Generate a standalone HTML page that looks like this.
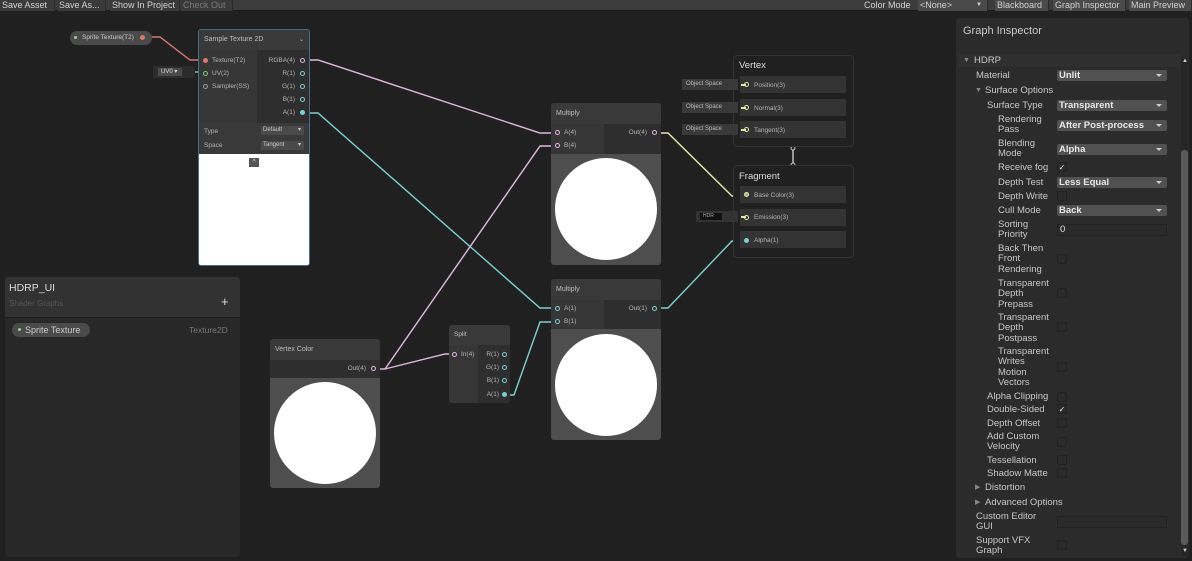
<!DOCTYPE html>
<html><head><meta charset="utf-8"><style>
*{box-sizing:border-box;margin:0;padding:0}
body{width:1192px;height:561px;background:#202020;font-family:"Liberation Sans",sans-serif;position:relative;overflow:hidden;color:#c4c4c4}
.a{position:absolute}
.tb{left:0;top:0;width:1192px;height:11px;background:#3c3c3c;border-bottom:1px solid #1a1a1a}
.tbb{position:absolute;top:0;height:11px;font-size:9px;line-height:11px;color:#d2d2d2;padding:0 2px;background:#3a3a3a;border-right:1px solid #2a2a2a;white-space:nowrap;overflow:hidden}
.node{position:absolute;background:#2e2e2e;border-radius:3px;overflow:hidden}
.nh{position:absolute;left:0;right:0;top:0;background:#393939;font-size:7px;color:#bfbfbf;padding-left:5px}
.pt{position:absolute;font-size:6.5px;color:#b5b5b5;white-space:nowrap}
.dot{position:absolute;width:5px;height:5px;border-radius:50%;border:1px solid #9a9a9a}
.prev{position:absolute;left:0;right:0;background:#4e4e4e}
.circ{position:absolute;background:#fff;border-radius:50%}
.lb{position:absolute;font-size:9.5px;line-height:10.4px;color:#c8c8c8;white-space:nowrap}
.dd{position:absolute;left:1057px;width:110px;height:11px;background:#515151;border-radius:2px;font-size:9.5px;line-height:11px;color:#e8e8e8;padding-left:2px;font-weight:bold}
.dd:after{content:"";position:absolute;right:5px;top:4px;border-left:3px solid transparent;border-right:3px solid transparent;border-top:3px solid #ccc}
.cb{position:absolute;left:1057px;width:10px;height:10px;background:#2a2a2a;border:1px solid #222;border-radius:2px;font-size:8px;line-height:9px;text-align:center;color:#eee}
.ms{position:absolute;height:11px;background:#393939;font-size:6px;line-height:11px;color:#bbb;padding-left:4px;white-space:nowrap}
</style></head><body>
<div class="a tb"></div>
<div class="tbb" style="left:0;width:55px">Save Asset</div>
<div class="tbb" style="left:57px;width:49px">Save As...</div>
<div class="tbb" style="left:110px;width:70px">Show In Project</div>
<div class="tbb" style="left:181px;width:52px;color:#7a7a7a">Check Out</div>
<div class="a" style="left:864px;top:0;font-size:9px;line-height:11px;color:#d2d2d2;white-space:nowrap">Color Mode</div>
<div class="tbb" style="left:918px;width:70px;background:#4a4a4a">&lt;None&gt;<span style="position:absolute;right:5px;font-size:6px">▼</span></div>
<div class="tbb" style="left:995px;width:54px;background:#4a4a4a">Blackboard</div>
<div class="tbb" style="left:1053px;width:73px;background:#4a4a4a">Graph Inspector</div>
<div class="tbb" style="left:1129px;width:63px;background:#4a4a4a">Main Preview</div>

<svg class="a" style="left:0;top:0" width="1192" height="561">
<g fill="none" stroke-width="1.4">
<path d="M146,37 L160,37 L190,60 L205,60" stroke="#d47a72"/>
<path d="M190,72 L205,72" stroke="#7fc97f"/>
<path d="M303,60 L318,60 L540,133 L557,133" stroke="#e0b8e0"/>
<path d="M303,113 L318,113 L540,308 L557,308" stroke="#7ed0d0"/>
<path d="M374,369 L385,369 L540,146 L557,146" stroke="#e0b8e0"/>
<path d="M385,369 L445,354 L454,354" stroke="#e0b8e0"/>
<path d="M503,395 L514,395 L540,322 L557,322" stroke="#7ed0d0"/>
<path d="M655,133 L668,133 L732,196 L747,196" stroke="#e8e8a8"/>
<path d="M655,308 L668,308 L732,241 L747,241" stroke="#7ed0d0"/>
<path d="M793,148 L793,165" stroke="#ccc"/>
</g>
<circle cx="793" cy="148" r="2" fill="#202020" stroke="#ccc"/>
<circle cx="793" cy="165" r="2" fill="#202020" stroke="#ccc"/>
</svg>

<div class="a" style="left:70px;top:31px;width:82px;height:14px;background:#4a4a4a;border-radius:7px;font-size:6.5px;line-height:14px;color:#c8c8c8;padding-left:12px;white-space:nowrap">Sprite Texture(T2)</div>
<div class="a" style="left:74px;top:36px;width:3px;height:3px;background:#9c9;border-radius:50%"></div>
<div class="a" style="left:140px;top:35px;width:5px;height:5px;border-radius:50%;background:#d47a72"></div>
<div class="a" style="left:153px;top:66px;width:42px;height:12px;background:#2c2c2c"></div>
<div class="a" style="left:158px;top:68px;width:24px;height:8px;background:#4a4a4a;font-size:6px;line-height:8px;color:#ddd;padding-left:3px;white-space:nowrap">UV0 ▾</div>

<div class="node" style="left:198px;top:29px;width:112px;height:237px;border:1px solid #46708a">
<div class="nh" style="height:20px;line-height:20px">Sample Texture 2D<span style="position:absolute;right:5px;font-size:6px">⌄</span></div>
<div class="a" style="left:0;top:20px;width:58px;height:73px;background:#363636"></div>
<div class="pt" style="left:13px;top:27px">Texture(T2)</div>
<div class="pt" style="left:13px;top:40px">UV(2)</div>
<div class="pt" style="left:13px;top:53px">Sampler(SS)</div>
<div class="dot" style="left:4px;top:28px;border-color:#d47a72;background:#d47a72"></div>
<div class="dot" style="left:4px;top:41px;border-color:#7fc97f"></div>
<div class="dot" style="left:4px;top:54px"></div>
<div class="pt" style="right:14px;top:27px">RGBA(4)</div>
<div class="pt" style="right:14px;top:40px">R(1)</div>
<div class="pt" style="right:14px;top:53px">G(1)</div>
<div class="pt" style="right:14px;top:66px">B(1)</div>
<div class="pt" style="right:14px;top:79px">A(1)</div>
<div class="dot" style="right:4px;top:28px;border-color:#e0b8e0"></div>
<div class="dot" style="right:4px;top:41px;border-color:#7ed0d0"></div>
<div class="dot" style="right:4px;top:54px;border-color:#7ed0d0"></div>
<div class="dot" style="right:4px;top:67px;border-color:#7ed0d0"></div>
<div class="dot" style="right:4px;top:80px;border-color:#7ed0d0;background:#7ed0d0"></div>
<div class="a" style="left:0;top:93px;width:112px;height:31px;background:#393939"></div>
<div class="pt" style="left:5px;top:98px">Type</div>
<div class="pt" style="left:5px;top:112px">Space</div>
<div class="a" style="left:62px;top:96px;width:43px;height:9px;background:#4a4a4a;font-size:6px;line-height:9px;padding-left:2px;color:#ccc">Default<span style="position:absolute;right:3px">▾</span></div>
<div class="a" style="left:62px;top:111px;width:43px;height:9px;background:#4a4a4a;font-size:6px;line-height:9px;padding-left:2px;color:#ccc">Tangent<span style="position:absolute;right:3px">▾</span></div>
<div class="a" style="left:0;top:124px;width:112px;height:113px;background:#fff"></div>
<div class="a" style="left:50px;top:128px;width:10px;height:9px;background:#555;color:#ddd;font-size:7px;line-height:9px;text-align:center">^</div>
</div>

<div class="node" style="left:551px;top:103px;width:110px;height:162px">
<div class="nh" style="height:21px;line-height:21px">Multiply</div>
<div class="a" style="left:0;top:21px;width:53px;height:30px;background:#363636"></div>
<div class="pt" style="left:13px;top:26px">A(4)</div><div class="pt" style="left:13px;top:39px">B(4)</div>
<div class="dot" style="left:4px;top:27px;border-color:#e0b8e0"></div><div class="dot" style="left:4px;top:40px;border-color:#e0b8e0"></div>
<div class="pt" style="right:14px;top:26px">Out(4)</div><div class="dot" style="right:4px;top:27px;border-color:#e0b8e0"></div>
<div class="prev" style="top:51px;height:111px"></div>
<div class="circ" style="left:4px;top:55px;width:102px;height:102px"></div>
</div>
<div class="node" style="left:551px;top:279px;width:110px;height:161px">
<div class="nh" style="height:21px;line-height:21px">Multiply</div>
<div class="a" style="left:0;top:21px;width:53px;height:29px;background:#363636"></div>
<div class="pt" style="left:13px;top:26px">A(1)</div><div class="pt" style="left:13px;top:39px">B(1)</div>
<div class="dot" style="left:4px;top:27px;border-color:#7ed0d0"></div><div class="dot" style="left:4px;top:40px;border-color:#7ed0d0"></div>
<div class="pt" style="right:14px;top:26px">Out(1)</div><div class="dot" style="right:4px;top:27px;border-color:#7ed0d0"></div>
<div class="prev" style="top:50px;height:111px"></div>
<div class="circ" style="left:4px;top:55px;width:102px;height:102px"></div>
</div>
<div class="node" style="left:270px;top:339px;width:110px;height:149px">
<div class="nh" style="height:21px;line-height:21px">Vertex Color</div>
<div class="pt" style="right:14px;top:26px">Out(4)</div><div class="dot" style="right:4px;top:27px;border-color:#e0b8e0"></div>
<div class="prev" style="top:39px;height:110px"></div>
<div class="circ" style="left:4px;top:43px;width:102px;height:102px"></div>
</div>
<div class="node" style="left:449px;top:325px;width:61px;height:78px">
<div class="nh" style="height:20px;line-height:20px;font-size:6.5px">Split</div>
<div class="a" style="left:0;top:20px;width:29px;height:58px;background:#363636"></div>
<div class="pt" style="left:12px;top:26px">In(4)</div><div class="dot" style="left:3px;top:27px;border-color:#e0b8e0"></div>
<div class="pt" style="right:11px;top:26px">R(1)</div><div class="pt" style="right:11px;top:39px">G(1)</div><div class="pt" style="right:11px;top:52px">B(1)</div><div class="pt" style="right:11px;top:66px">A(1)</div>
<div class="dot" style="right:3px;top:27px;border-color:#7ed0d0"></div><div class="dot" style="right:3px;top:40px;border-color:#7ed0d0"></div><div class="dot" style="right:3px;top:53px;border-color:#7ed0d0"></div><div class="dot" style="right:3px;top:67px;border-color:#7ed0d0;background:#7ed0d0"></div>
</div>

<div class="a" style="left:733px;top:55px;width:121px;height:92px;border:1px solid #333;border-radius:4px;background:#202020"></div>
<div class="a" style="left:739px;top:60px;font-size:9.5px;color:#ddd">Vertex</div>
<div class="a" style="left:733px;top:165px;width:121px;height:93px;border:1px solid #333;border-radius:4px;background:#202020"></div>
<div class="a" style="left:739px;top:171px;font-size:9.5px;color:#ddd">Fragment</div>
<div class="a" style="left:740px;top:76px;width:106px;height:17px;background:#333"></div>
<div class="a" style="left:740px;top:99px;width:106px;height:17px;background:#333"></div>
<div class="a" style="left:740px;top:121px;width:106px;height:17px;background:#333"></div>
<div class="a" style="left:740px;top:186px;width:106px;height:17px;background:#333"></div>
<div class="a" style="left:740px;top:209px;width:106px;height:17px;background:#333"></div>
<div class="a" style="left:740px;top:231px;width:106px;height:17px;background:#333"></div>
<div class="pt" style="left:754px;top:82px">Position(3)</div><div class="pt" style="left:754px;top:105px">Normal(3)</div><div class="pt" style="left:754px;top:127px">Tangent(3)</div>
<div class="pt" style="left:754px;top:192px">Base Color(3)</div><div class="pt" style="left:754px;top:214px">Emission(3)</div><div class="pt" style="left:754px;top:237px">Alpha(1)</div>
<div class="dot" style="left:744px;top:82px;border-color:#e8e8a8"></div><div class="dot" style="left:744px;top:105px;border-color:#e8e8a8"></div><div class="dot" style="left:744px;top:127px;border-color:#e8e8a8"></div>
<div class="dot" style="left:744px;top:192px;border-color:#e8e8a8;background:#aa9"></div><div class="dot" style="left:744px;top:215px;border-color:#e8e8a8"></div><div class="dot" style="left:744px;top:238px;border-color:#7ed0d0;background:#7ed0d0"></div>
<div class="ms" style="left:682px;top:79px;width:56px">Object Space</div>
<div class="ms" style="left:682px;top:102px;width:56px">Object Space</div>
<div class="ms" style="left:682px;top:124px;width:56px">Object Space</div>
<div class="a" style="left:741px;top:84px;width:5px;height:1.5px;background:#e8e8a8"></div>
<div class="a" style="left:741px;top:107px;width:5px;height:1.5px;background:#e8e8a8"></div>
<div class="a" style="left:741px;top:129px;width:5px;height:1.5px;background:#e8e8a8"></div>
<div class="a" style="left:696px;top:211px;width:42px;height:11px;background:#333"></div>
<div class="a" style="left:700px;top:213px;width:22px;height:7px;background:#111;font-size:5px;line-height:7px;color:#aaa;padding-left:3px">HDR</div>
<div class="a" style="left:741px;top:216px;width:5px;height:1.5px;background:#e8e8a8"></div>

<div class="a" style="left:5px;top:277px;width:235px;height:280px;background:#282828;border-radius:3px"></div>
<div class="a" style="left:5px;top:277px;width:235px;height:41px;background:#323232;border-radius:3px 3px 0 0;border-bottom:1px solid #1e1e1e"></div>
<div class="a" style="left:9px;top:282px;font-size:10.5px;color:#ddd">HDRP_UI</div>
<div class="a" style="left:9px;top:299px;font-size:8px;color:#555">Shader Graphs</div>
<div class="a" style="left:221px;top:294px;font-size:13px;color:#ddd">+</div>
<div class="a" style="left:12px;top:323px;width:78px;height:14px;background:#4a4a4a;border-radius:7px;font-size:9px;line-height:14px;color:#ccc;padding-left:13px;white-space:nowrap">Sprite Texture</div>
<div class="a" style="left:18px;top:328px;width:3px;height:3px;background:#8d8;border-radius:50%"></div>
<div class="a" style="left:189px;top:325px;font-size:8.5px;color:#777">Texture2D</div>

<div class="a" style="left:956px;top:18px;width:233px;height:540px;background:#2b2b2b;border-radius:4px"></div>
<div class="a" style="left:963px;top:25px;font-size:11px;color:#c8c8c8">Graph Inspector</div>
<div class="a" style="left:958px;top:54px;width:222px;height:13px;background:#2f2f2f"></div>
<div class="a" style="left:1181px;top:58px;width:7px;height:498px;background:#262626"></div>
<div class="a" style="left:1181px;top:150px;width:7px;height:395px;background:#5a5a5a;border-radius:3px"></div>
<div class="a" style="left:1182px;top:58px;font-size:6px;color:#ccc">▲</div>
<div class="a" style="left:1182px;top:548px;font-size:6px;color:#ccc">▼</div>

<div class="lb" style="left:963px;top:56px;font-size:7px;color:#888">▼</div><div class="lb" style="left:974px;top:56px">HDRP</div>
<div class="lb" style="left:976px;top:71px">Material</div><div class="dd" style="top:70px">Unlit</div>
<div class="lb" style="left:975px;top:86px;font-size:7px;color:#888">▼</div><div class="lb" style="left:985px;top:86px">Surface Options</div>
<div class="lb" style="left:987px;top:101px">Surface Type</div><div class="dd" style="top:100px">Transparent</div>
<div class="lb" style="left:998px;top:115px">Rendering<br>Pass</div><div class="dd" style="top:120px">After Post-process</div>
<div class="lb" style="left:998px;top:139px">Blending<br>Mode</div><div class="dd" style="top:144px">Alpha</div>
<div class="lb" style="left:998px;top:163px">Receive fog</div><div class="cb" style="top:162px">✓</div>
<div class="lb" style="left:998px;top:178px">Depth Test</div><div class="dd" style="top:177px">Less Equal</div>
<div class="lb" style="left:998px;top:192px">Depth Write</div><div class="cb" style="top:191px"></div>
<div class="lb" style="left:998px;top:206px">Cull Mode</div><div class="dd" style="top:205px">Back</div>
<div class="lb" style="left:998px;top:220px">Sorting<br>Priority</div><div class="a" style="left:1057px;top:224px;width:110px;height:12px;background:#2a2a2a;border:1px solid #222;font-size:9.5px;line-height:10px;padding-left:2px;color:#ddd">0</div>
<div class="lb" style="left:998px;top:244px">Back Then<br>Front<br>Rendering</div><div class="cb" style="top:254px"></div>
<div class="lb" style="left:998px;top:279px">Transparent<br>Depth<br>Prepass</div><div class="cb" style="top:288px"></div>
<div class="lb" style="left:998px;top:313px">Transparent<br>Depth<br>Postpass</div><div class="cb" style="top:322px"></div>
<div class="lb" style="left:998px;top:347px">Transparent<br>Writes<br>Motion<br>Vectors</div><div class="cb" style="top:362px"></div>
<div class="lb" style="left:987px;top:392px">Alpha Clipping</div><div class="cb" style="top:392px"></div>
<div class="lb" style="left:987px;top:405px">Double-Sided</div><div class="cb" style="top:404px">✓</div>
<div class="lb" style="left:987px;top:419px">Depth Offset</div><div class="cb" style="top:418px"></div>
<div class="lb" style="left:987px;top:432px">Add Custom<br>Velocity</div><div class="cb" style="top:437px"></div>
<div class="lb" style="left:987px;top:456px">Tessellation</div><div class="cb" style="top:455px"></div>
<div class="lb" style="left:987px;top:469px">Shadow Matte</div><div class="cb" style="top:468px"></div>
<div class="lb" style="left:975px;top:483px;font-size:7px;color:#888">▶</div><div class="lb" style="left:985px;top:483px">Distortion</div>
<div class="lb" style="left:975px;top:498px;font-size:7px;color:#888">▶</div><div class="lb" style="left:985px;top:498px">Advanced Options</div>
<div class="lb" style="left:976px;top:512px">Custom Editor<br>GUI</div><div class="a" style="left:1057px;top:516px;width:110px;height:12px;background:#2a2a2a;border:1px solid #222"></div>
<div class="lb" style="left:976px;top:536px">Support VFX<br>Graph</div><div class="cb" style="top:540px"></div>
</body></html>
